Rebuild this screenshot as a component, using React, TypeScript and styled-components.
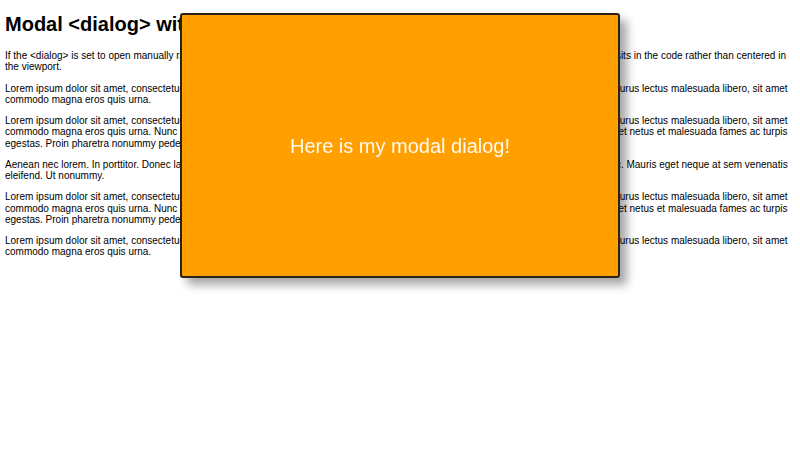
import React from "react";
import styled, { createGlobalStyle } from "styled-components";

const GlobalStyle = createGlobalStyle`
  html, body {
    margin: 0;
    min-height: 100%;
  }
  body {
    padding: 0 5px;
    background: #fff;
    color: #000;
    font-family: "Liberation Sans", Arial, sans-serif;
  }
`;

const Page = styled.main`
  display: flow-root;
`;

const Heading = styled.h1`
  font-size: 20px;
  font-weight: bold;
  margin: 13px 0 14px;
  line-height: 23px;
`;

const Paragraph = styled.p`
  font-size: 10px;
  line-height: 11.25px;
  margin: 10px 0;
`;

const Dialog = styled.div`
  position: fixed;
  top: 13px;
  left: 180px;
  width: 440px;
  height: 265px;
  box-sizing: border-box;
  background: #ff9f00;
  border: 2px solid #2a2118;
  border-radius: 3px;
  box-shadow: 7px 7px 10px rgba(0, 0, 0, 0.35);
  display: flex;
  align-items: center;
  justify-content: center;
`;

const DialogText = styled.p`
  margin: 2px 0 0;
  color: #fffaf0;
  font-size: 20px;
`;

const lorem =
  "Lorem ipsum dolor sit amet, consectetuer adipiscing elit. Maecenas porttitor congue massa. Fusce posuere, magna sed pulvinar ultricies, purus lectus malesuada libero, sit amet commodo magna eros quis urna.";
const loremLong =
  lorem +
  " Nunc viverra imperdiet enim. Fusce est. Vivamus a tellus. Pellentesque habitant morbi tristique senectus et netus et malesuada fames ac turpis egestas. Proin pharetra nonummy pede. Mauris et orci.";

export default function App() {
  return (
    <Page>
      <GlobalStyle />
      <Heading>Modal &lt;dialog&gt; with manual positioning</Heading>
      <Paragraph>
        If the &lt;dialog&gt; is set to open manually rather than with the showModal() method, it is not modal, and it
        will instead be placed right where it sits in the code rather than centered in the viewport.
      </Paragraph>
      <Paragraph>{lorem}</Paragraph>
      <Paragraph>{loremLong}</Paragraph>
      <Paragraph>
        Aenean nec lorem. In porttitor. Donec laoreet nonummy augue. Suspendisse dui purus, scelerisque at, vulputate
        vitae, pretium mattis, nunc. Mauris eget neque at sem venenatis eleifend. Ut nonummy.
      </Paragraph>
      <Paragraph>{loremLong}</Paragraph>
      <Paragraph>{lorem}</Paragraph>
      <Dialog role="dialog">
        <DialogText>Here is my modal dialog!</DialogText>
      </Dialog>
    </Page>
  );
}
